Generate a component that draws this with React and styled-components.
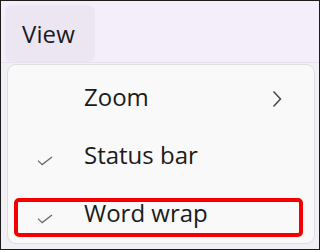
import styled, { createGlobalStyle } from "styled-components";

const Global = createGlobalStyle`
  html, body {
    margin: 0;
    padding: 0;
    background: #ffffff;
  }
  * {
    box-sizing: border-box;
  }
`;

const Frame = styled.div`
  width: 320px;
  height: 250px;
  border: 1px solid #1c1c1c;
  background: #f2f0f4;
  display: flex;
  flex-direction: column;
  overflow: hidden;
  font-family: "Open Sans", "Noto Sans", sans-serif;
  color: #1b1b1b;
`;

const MenuBar = styled.div`
  height: 62px;
  flex-shrink: 0;
  background: #f4eefa;
  border-bottom: 1px solid #e7e1ee;
  padding: 4px 0 0 4px;
  display: flex;
  align-items: flex-start;
`;

const BarButton = styled.div`
  width: 90px;
  height: 57px;
  border-radius: 7px;
  background: #ece6f3;
  display: flex;
  align-items: center;
  padding-left: 17px;
  font-size: 24px;
  letter-spacing: 0.1px;
`;

const Stage = styled.div`
  flex: 1;
  padding: 1px 0 0 6px;
`;

const Panel = styled.div`
  width: 308px;
  height: 180px;
  background: #f9f9f9;
  border: 1px solid #dedde0;
  border-radius: 9px;
  padding-top: 4px;
  display: flex;
  flex-direction: column;
`;

const Row = styled.div`
  position: relative;
  height: 58px;
  display: grid;
  grid-template-columns: 16px 1fr 10px;
  column-gap: 31px;
  align-items: center;
  padding: 0 32px 0 29px;
  font-size: 24px;

  ${(p) =>
    p.$marked &&
    `
    &::after {
      content: "";
      position: absolute;
      left: 6px;
      right: 11px;
      top: 13px;
      bottom: 6px;
      border: 4px solid #f40000;
      border-radius: 5px;
    }
  `}
`;

const Label = styled.span`
  line-height: 1;
  margin-top: -2px;
`;

const Check = () => (
  <svg width="16" height="10" viewBox="0 0 16 10">
    <path d="M1 4.6 L5.2 8.6 L15 1" fill="none" stroke="#6a6a6a" strokeWidth="1.3" />
  </svg>
);

const Chevron = () => (
  <svg width="10" height="18" viewBox="0 0 10 18">
    <path d="M1.5 1.5 L8.5 9 L1.5 16.5" fill="none" stroke="#474747" strokeWidth="1.5" />
  </svg>
);

const Item = ({ checked, submenu, marked, children }) => (
  <Row $marked={marked}>
    <span>{checked && <Check />}</span>
    <Label>{children}</Label>
    <span>{submenu && <Chevron />}</span>
  </Row>
);

export default function App() {
  return (
    <>
      <Global />
      <Frame>
        <MenuBar>
          <BarButton>View</BarButton>
        </MenuBar>
        <Stage>
          <Panel>
            <Item submenu>Zoom</Item>
            <Item checked>Status bar</Item>
            <Item checked marked>Word wrap</Item>
          </Panel>
        </Stage>
      </Frame>
    </>
  );
}
